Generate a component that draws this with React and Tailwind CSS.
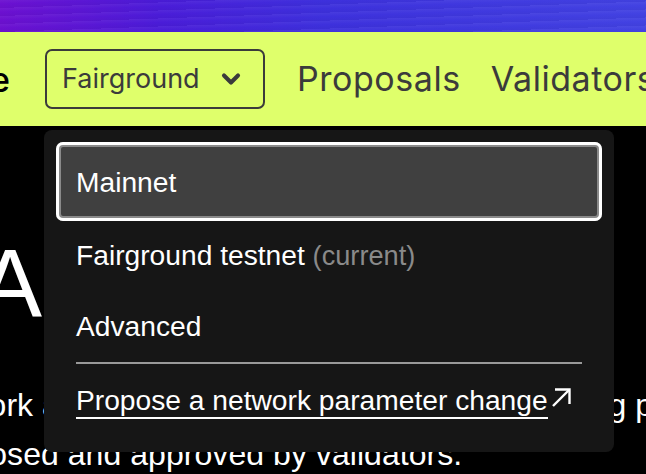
import React from 'react';
import { ChevronDown } from 'lucide-react';

const NavLink = ({ children }) => (
  <a className="text-[34px] leading-none tracking-[0.55px] text-[#3b3b3b] whitespace-nowrap font-['Inter',sans-serif]">{children}</a>
);

const MenuItem = ({ children }) => (
  <div className="h-[68px] mb-[3px] flex items-center">{children}</div>
);

const App = () => {
  return (
    <div className="relative w-[646px] h-[474px] overflow-hidden bg-black font-['Liberation_Sans',sans-serif]">
      {/* Banner */}
      <div className="h-[32px] bg-[repeating-linear-gradient(178deg,rgba(255,255,255,0.05)_0px,rgba(255,255,255,0)_4px,rgba(0,0,0,0.03)_8px),linear-gradient(90deg,#6c10d0_0%,#4a1cd8_25%,#3d30dc_50%,#4242e2_100%)]" />

      {/* Nav */}
      <div className="h-[94px] bg-[#dfff6b] flex items-center">
        <span className="w-[10px] shrink-0 overflow-hidden flex justify-end text-[34px] font-medium text-black font-['Inter',sans-serif]">e</span>
        <button className="ml-[35px] shrink-0 w-[220px] h-[60px] flex items-center justify-between pl-[15px] pr-[18px] rounded-[7px] border-2 border-[#3b3b3b] text-[27px] text-[#3b3b3b] font-['Inter',sans-serif]">
          Fairground
          <ChevronDown size={28} strokeWidth={3.5} />
        </button>
        <div className="ml-[32px] flex gap-[30px]">
          <NavLink>Proposals</NavLink>
          <NavLink>Validators</NavLink>
        </div>
      </div>

      {/* Page behind the menu */}
      <div className="text-white pt-[117px] -ml-[79px] w-[732px] whitespace-nowrap">
        <h1 className="text-[96px] leading-[80px] pl-[57px]">A</h1>
        <div className="mt-[58px] text-[32px] leading-[49px]">
          <p className="flex justify-between">
            <span>network and</span>
            <span>voting p</span>
          </p>
          <p className="pl-[4px] tracking-[0.05px]">proposed and approved by validators.</p>
        </div>
      </div>

      {/* Network dropdown */}
      <div className="absolute left-[44px] top-[130px] w-[570px] h-[322px] rounded-[8px] bg-[#161616] px-[32px] text-[28.2px] text-white">
        <div className="h-[79px] mt-[12px] -mx-[20px] pl-[15px] pr-[16px] pt-[1px] flex items-center rounded-[7px] bg-[#404040] border-[5px] border-[#8a8a8a] outline-[3px] outline-white -outline-offset-[3px]">
          Mainnet
        </div>
        <MenuItem>
          <span>Fairground testnet <span className="text-[27.2px] text-[#8a8a8a]">(current)</span></span>
        </MenuItem>
        <MenuItem>Advanced</MenuItem>
        <div className="-mt-[1px] border-t-2 border-[#999999]" />
        <div className="mt-[20px] flex items-start">
          <a className="leading-[33px] border-b-2 border-white whitespace-nowrap">Propose a network parameter change</a>
          <svg viewBox="0 0 20 20" className="w-[20px] h-[20px] mt-[4px] ml-[3px]" fill="none" stroke="white" strokeWidth="2.4">
            <path d="M4 1.5H18.5V16" />
            <path d="M18 2L2 18" />
          </svg>
        </div>
      </div>
    </div>
  );
};

export default App;
